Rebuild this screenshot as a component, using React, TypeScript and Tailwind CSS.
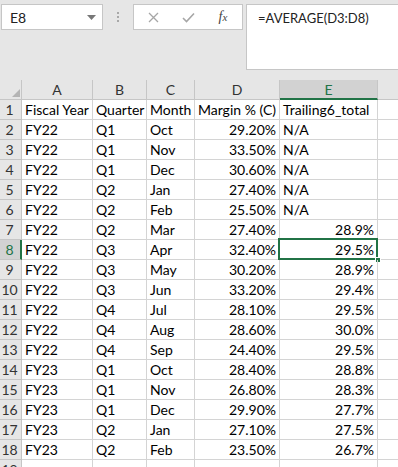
import React from "react";

const rows: string[][] = [
  ["Fiscal Year", "Quarter", "Month", "Margin % (C)", "Trailing6_total"],
  ["FY22", "Q1", "Oct", "29.20%", "N/A"],
  ["FY22", "Q1", "Nov", "33.50%", "N/A"],
  ["FY22", "Q1", "Dec", "30.60%", "N/A"],
  ["FY22", "Q2", "Jan", "27.40%", "N/A"],
  ["FY22", "Q2", "Feb", "25.50%", "N/A"],
  ["FY22", "Q2", "Mar", "27.40%", "28.9%"],
  ["FY22", "Q3", "Apr", "32.40%", "29.5%"],
  ["FY22", "Q3", "May", "30.20%", "28.9%"],
  ["FY22", "Q3", "Jun", "33.20%", "29.4%"],
  ["FY22", "Q4", "Jul", "28.10%", "29.5%"],
  ["FY22", "Q4", "Aug", "28.60%", "30.0%"],
  ["FY22", "Q4", "Sep", "24.40%", "29.5%"],
  ["FY23", "Q1", "Oct", "28.40%", "28.8%"],
  ["FY23", "Q1", "Nov", "26.80%", "28.3%"],
  ["FY23", "Q1", "Dec", "29.90%", "27.7%"],
  ["FY23", "Q2", "Jan", "27.10%", "27.5%"],
  ["FY23", "Q2", "Feb", "23.50%", "26.7%"],
  ["", "", "", "", ""],
];

const cols = ["A", "B", "C", "D", "E"];

export default function App() {
  return (
    <div
      className="w-[398px] h-[467px] overflow-hidden bg-[#e6e6e6]"
      style={{ fontFamily: "Lato, 'Liberation Sans', sans-serif" }}
    >
      {/* Formula bar */}
      <div className="h-[80px] flex items-start pt-[4px]">
        <div className="ml-[1px] w-[102px] h-[26px] bg-white border border-[#c6c6c6] flex items-center justify-between pl-[8px] pr-[6px] text-[14px] text-[#222]">
          <span>E8</span>
          <svg width="9" height="5" viewBox="0 0 9 5">
            <polygon points="0,0 9,0 4.5,5" fill="#777" />
          </svg>
        </div>
        <div className="w-[30px] h-[26px] flex flex-col items-center justify-center gap-[2px]">
          <div className="w-[2px] h-[2px] bg-[#a8a8a8]" />
          <div className="w-[2px] h-[2px] bg-[#a8a8a8]" />
          <div className="w-[2px] h-[2px] bg-[#a8a8a8]" />
        </div>
        <div className="w-[110px] h-[26px] bg-white border border-[#c6c6c6] flex items-center">
          <div className="w-[38px] flex justify-center">
            <svg width="11" height="11" viewBox="0 0 11 11">
              <path d="M1 1 L10 10 M10 1 L1 10" stroke="#a6a6a6" strokeWidth="1.3" />
            </svg>
          </div>
          <div className="w-[32px] flex justify-center">
            <svg width="13" height="11" viewBox="0 0 13 11">
              <path d="M1 6 L4.5 9.5 L12 1.5" stroke="#a6a6a6" strokeWidth="1.6" fill="none" />
            </svg>
          </div>
          <div className="flex-1 flex justify-center">
            <span
              className="italic text-[14px] text-[#444] leading-none"
              style={{ fontFamily: "'Liberation Serif', serif" }}
            >
              f<span className="text-[11px]">x</span>
            </span>
          </div>
        </div>
        <div className="ml-[3px] flex-1 h-[66px] bg-white border border-[#c6c6c6] border-r-0 pl-[11px] pt-[4px] text-[13px] text-[#222]">
          =AVERAGE(D3:D8)
        </div>
      </div>

      {/* Grid */}
      <div className="grid grid-cols-[22px_71px_54px_48px_85px_98px_1fr] bg-white text-[14px] text-black">
        {/* Header row */}
        <div className="relative h-[20px] bg-[#e6e6e6] border-r border-b border-[#c6c6c6]">
          <svg className="absolute right-[1px] bottom-[2px]" width="8" height="8" viewBox="0 0 8 8">
            <polygon points="8,0 8,8 0,8" fill="#b4b4b4" />
          </svg>
        </div>
        {cols.map((c) => (
          <div
            key={c}
            className={
              c === "E"
                ? "h-[20px] bg-[#d2d2d2] border-r border-[#c6c6c6] border-b-2 border-b-[#217346] text-[#217346] flex items-center justify-center text-[14px]"
                : "h-[20px] bg-[#e6e6e6] border-r border-b border-[#c6c6c6] text-[#333] flex items-center justify-center text-[14px]"
            }
          >
            {c}
          </div>
        ))}
        <div className="h-[20px] bg-[#e6e6e6] border-b border-[#c6c6c6]" />

        {rows.map((r, i) => {
          const n = i + 1;
          const active = n === 8;
          return (
            <React.Fragment key={n}>
              <div
                className={
                  active
                    ? "h-[20px] bg-[#d2d2d2] border-r-2 border-r-[#217346] border-b border-[#c6c6c6] text-[#217346] flex items-center justify-center pr-[1px] text-[14px]"
                    : "h-[20px] bg-[#e6e6e6] border-r border-b border-[#c6c6c6] text-[#333] flex items-center justify-center pr-[2px] text-[14px]"
                }
              >
                {n}
              </div>
              {r.map((v, j) => {
                const right = j === 3 || (j === 4 && v !== "N/A" && i > 0);
                return (
                  <div
                    key={j}
                    className={
                      "relative h-[20px] border-r border-b border-[#d4d4d4] flex items-center whitespace-nowrap px-[3px] " +
                      (right ? "justify-end" : "justify-start")
                    }
                  >
                    {v}
                    {active && j === 4 && (
                      <>
                        <div className="absolute left-[-2px] top-[-2px] right-[-1px] bottom-[-1px] border-2 border-[#217346] pointer-events-none" />
                        <div className="absolute right-[-4px] bottom-[-4px] w-[6px] h-[6px] bg-[#217346] border border-white" />
                      </>
                    )}
                  </div>
                );
              })}
              <div className="h-[20px] border-b border-[#d4d4d4]" />
            </React.Fragment>
          );
        })}
      </div>
    </div>
  );
}
